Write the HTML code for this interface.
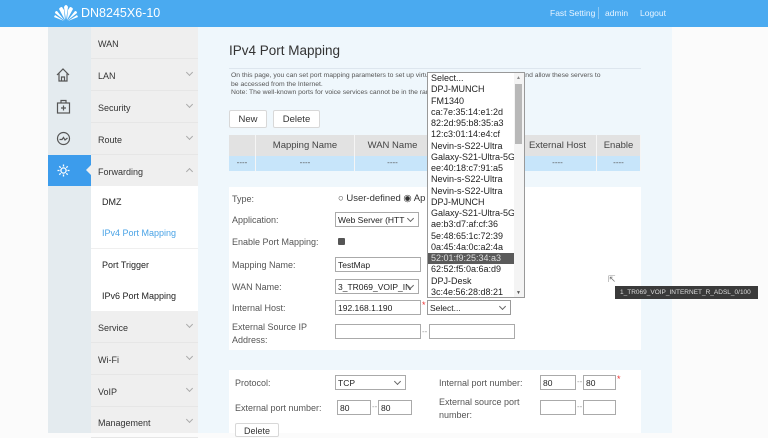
<!DOCTYPE html>
<html><head><meta charset="utf-8"><style>
*{margin:0;padding:0;box-sizing:border-box}
body{width:768px;height:433px;overflow:hidden;background:#fbfbfb;font-family:"Liberation Sans",sans-serif;position:relative;color:#333}
.a{position:absolute}
.top{left:0;top:0;width:768px;height:27px;background:#4aaaf0}
.ic{left:48px;top:27px;width:43px;height:406px;background:#e4ebef}
.menu{left:91px;top:27px;width:107px;height:406px;background:#efefef}
.mi{position:absolute;left:91px;width:107px;height:32px;font-size:9px;color:#333;padding:12px 0 0 7px;border-bottom:1px solid #e6e6e6}
.chev{position:absolute;right:6px;top:11px;width:5px;height:5px;border-right:1px solid #aaa;border-bottom:1px solid #aaa;transform:rotate(45deg)}
.sub{position:absolute;left:91px;width:107px;height:31px;font-size:9px;color:#222;padding:11px 0 0 11px;background:#fff}
.content{left:198px;top:27px;width:474px;height:406px;background:#eff7fc}
.btn{position:absolute;background:#fff;border:1px solid #d8d8d8;border-radius:2px;font-size:9.5px;text-align:center;padding-top:3px;height:18px}
.lbl{position:absolute;font-size:9px;color:#555}
.inp{position:absolute;background:#fff;border:1px solid #aaa;font-size:8.5px;padding:2px 2px;height:15px;color:#222;white-space:nowrap;overflow:hidden}
.sel:after{content:"";position:absolute;right:5px;top:3px;width:4px;height:4px;border-right:1px solid #666;border-bottom:1px solid #666;transform:rotate(45deg);background:#fff}
.th{position:absolute;top:135px;height:21px;background:#e2e2e2;font-size:9.5px;color:#444;text-align:center;padding-top:5px;border-right:1px solid #f5f5f5}
.td{position:absolute;top:156px;height:15px;background:#c7e5fa;font-size:8px;color:#555;text-align:center;padding-top:2px;border-right:1px solid #f5f5f5}
.dd{left:427px;top:72px;width:98px;height:226px;background:#fff;border:1px solid #999;font-size:9px;color:#222;font-family:"Liberation Sans",sans-serif}
.dd div{height:11.25px;line-height:11.25px;padding-left:3px;white-space:nowrap;width:86px;overflow:hidden}
</style></head><body>
<div class="a top"></div>
<svg class="a" style="left:54px;top:4px" width="24" height="18" viewBox="0 0 24 18"><g fill="#fff"><path d="M12 16 L10 3 Q11 1 12 1 Q13 1 14 3Z"/><path d="M11 16 L5 5 Q6 3 8 3 L10 6Z"/><path d="M13 16 L19 5 Q18 3 16 3 L14 6Z"/><path d="M10.5 16.5 L1 9 Q1 7 3 7 Z"/><path d="M13.5 16.5 L23 9 Q23 7 21 7Z"/><path d="M10 17 L0 13 L1 11Z"/><path d="M14 17 L24 13 L23 11Z"/></g></svg>
<div class="a" style="left:81px;top:6px;font-size:12.5px;color:#fff">DN8245X6-10</div>
<div class="a" style="left:550px;top:8px;font-size:8.5px;color:#e8f4ff">Fast Setting</div>
<div class="a" style="left:598px;top:7px;width:1px;height:12px;background:#8cc8f4"></div>
<div class="a" style="left:605px;top:8px;font-size:8.5px;color:#e8f4ff">admin</div>
<div class="a" style="left:640px;top:8px;font-size:8.5px;color:#e8f4ff">Logout</div>

<div class="a ic"></div>
<div class="a" style="left:48px;top:155px;width:43px;height:31px;background:#3c9cec"></div>
<div class="a" style="left:86px;top:164px;width:0;height:0;border-top:6px solid transparent;border-bottom:6px solid transparent;border-right:6px solid #efefef"></div>
<svg class="a" style="left:55px;top:67px" width="16" height="16" viewBox="0 0 16 16" fill="none" stroke="#555" stroke-width="1.2"><path d="M2 8 L8 2 L14 8 M4 6.5 V14 H12 V6.5 M6.5 14 V10 H9.5 V14"/></svg>
<svg class="a" style="left:56px;top:99px" width="15" height="15" viewBox="0 0 15 15" fill="none" stroke="#555" stroke-width="1.2"><rect x="1.5" y="4" width="12" height="10"/><path d="M5 4 V1.5 H10 V4 M7.5 6.5 V11.5 M5 9 H10"/></svg>
<svg class="a" style="left:56px;top:131px" width="15" height="15" viewBox="0 0 15 15" fill="none" stroke="#555" stroke-width="1.2"><circle cx="7.5" cy="7.5" r="6"/><path d="M3.5 8.5 L6 8.5 L7.5 6.5 L9 9 L11.5 7"/></svg>
<svg class="a" style="left:56px;top:163px" width="15" height="15" viewBox="0 0 15 15" fill="none" stroke="#fff" stroke-width="1.3"><circle cx="7.5" cy="7.5" r="2.6"/><path d="M7.5 1.5 V3.5 M7.5 11.5 V13.5 M1.5 7.5 H3.5 M11.5 7.5 H13.5 M3.3 3.3 L4.7 4.7 M10.3 10.3 L11.7 11.7 M3.3 11.7 L4.7 10.3 M10.3 4.7 L11.7 3.3"/></svg>

<div class="a menu"></div>
<div class="mi" style="top:27px;background:#efefef">WAN</div>
<div class="mi" style="top:59px">LAN<span class="chev"></span></div>
<div class="mi" style="top:91px">Security<span class="chev"></span></div>
<div class="mi" style="top:123px">Route<span class="chev"></span></div>
<div class="mi" style="top:155px">Forwarding<span class="chev" style="transform:rotate(225deg);top:14px"></span></div>
<div class="sub" style="top:186px">DMZ</div>
<div class="sub" style="top:217px;color:#4aa3e6">IPv4 Port Mapping</div>
<div class="sub" style="top:249px">Port Trigger</div>
<div class="sub" style="top:280px;height:31px">IPv6 Port Mapping</div>
<div class="mi" style="top:311px">Service<span class="chev"></span></div>
<div class="mi" style="top:343px">Wi-Fi<span class="chev"></span></div>
<div class="mi" style="top:375px">VoIP<span class="chev"></span></div>
<div class="mi" style="top:406px">Management<span class="chev"></span></div>

<div class="a content"></div>
<div class="a" style="left:229px;top:43px;font-size:13.5px;color:#333">IPv4 Port Mapping</div>
<div class="a" style="left:229px;top:68px;width:412px;height:1px;background:#dde6ee"></div>
<div class="a" style="left:231px;top:72px;font-size:6.8px;color:#555;line-height:8.5px">On this page, you can set port mapping parameters to set up virtual servers on the LAN network and allow these servers to<br>be accessed from the Internet.<br>Note: The well-known ports for voice services cannot be in the range of mapping ports.</div>
<div class="btn" style="left:229px;top:110px;width:38px">New</div>
<div class="btn" style="left:273px;top:110px;width:47px">Delete</div>
<div class="th" style="left:229px;width:27px"></div>
<div class="th" style="left:256px;width:99px">Mapping Name</div>
<div class="th" style="left:355px;width:76px">WAN Name</div>
<div class="th" style="left:431px;width:88px"></div>
<div class="th" style="left:519px;width:78px">External Host</div>
<div class="th" style="left:597px;width:44px">Enable</div>
<div class="td" style="left:229px;width:27px">----</div>
<div class="td" style="left:256px;width:99px">----</div>
<div class="td" style="left:355px;width:76px">----</div>
<div class="td" style="left:431px;width:88px"></div>
<div class="td" style="left:519px;width:78px">----</div>
<div class="td" style="left:597px;width:44px">----</div>

<div class="a" style="left:229px;top:187px;width:412px;height:163px;background:#fff"></div>
<div class="lbl" style="left:232px;top:194px">Type:</div>
<div class="lbl" style="left:338px;top:193px;font-size:9.5px;color:#333">○ User-defined ◉ Ap</div>
<div class="lbl" style="left:232px;top:215px">Application:</div>
<div class="inp sel" style="left:335px;top:212px;width:84px">Web Server (HTT</div>
<div class="lbl" style="left:232px;top:237px">Enable Port Mapping:</div>
<div class="a" style="left:338px;top:238px;width:7px;height:7px;background:#555;border-radius:1px"></div>
<div class="lbl" style="left:232px;top:260px">Mapping Name:</div>
<div class="inp" style="left:335px;top:257px;width:86px">TestMap</div>
<div class="lbl" style="left:232px;top:282px">WAN Name:</div>
<div class="inp sel" style="left:335px;top:279px;width:84px">3_TR069_VOIP_IN</div>
<div class="lbl" style="left:232px;top:303px">Internal Host:</div>
<div class="inp" style="left:335px;top:300px;width:86px">192.168.1.190</div>
<div class="a" style="left:422px;top:300px;font-size:9px;color:#e33">*</div>
<div class="inp sel" style="left:427px;top:300px;width:84px;border-color:#999">Select...</div>
<div class="lbl" style="left:232px;top:321px;line-height:13px">External Source IP<br>Address:</div>
<div class="inp" style="left:335px;top:324px;width:86px"></div>
<div class="a" style="left:422px;top:327px;font-size:8px;color:#999">--</div>
<div class="inp" style="left:429px;top:324px;width:86px"></div>

<div class="a" style="left:229px;top:370px;width:412px;height:63px;background:#fff"></div>
<div class="lbl" style="left:235px;top:378px">Protocol:</div>
<div class="inp sel" style="left:335px;top:375px;width:71px">TCP</div>
<div class="lbl" style="left:439px;top:378px">Internal port number:</div>
<div class="inp" style="left:540px;top:375px;width:36px">80</div>
<div class="a" style="left:577px;top:377px;font-size:8px;color:#999">--</div>
<div class="inp" style="left:583px;top:375px;width:33px">80</div>
<div class="a" style="left:617px;top:374px;font-size:9px;color:#e33">*</div>
<div class="lbl" style="left:235px;top:403px">External port number:</div>
<div class="inp" style="left:337px;top:400px;width:34px">80</div>
<div class="a" style="left:372px;top:402px;font-size:8px;color:#999">--</div>
<div class="inp" style="left:378px;top:400px;width:34px">80</div>
<div class="lbl" style="left:439px;top:396px;line-height:13px">External source port<br>number:</div>
<div class="inp" style="left:540px;top:400px;width:36px"></div>
<div class="a" style="left:577px;top:402px;font-size:8px;color:#999">--</div>
<div class="inp" style="left:583px;top:400px;width:33px"></div>
<div class="btn" style="left:235px;top:423px;width:44px;height:14px;font-size:9px;padding-top:2px">Delete</div>

<div class="a dd">
<div>Select...</div><div>DPJ-MUNCH</div><div>FM1340</div><div>ca:7e:35:14:e1:2d</div><div>82:2d:95:b8:35:a3</div><div>12:c3:01:14:e4:cf</div><div>Nevin-s-S22-Ultra</div><div>Galaxy-S21-Ultra-5G</div><div>ee:40:18:c7:91:a5</div><div>Nevin-s-S22-Ultra</div><div>Nevin-s-S22-Ultra</div><div>DPJ-MUNCH</div><div>Galaxy-S21-Ultra-5G</div><div>ae:b3:d7:af:cf:36</div><div>5e:48:65:1c:72:39</div><div>0a:45:4a:0c:a2:4a</div><div style="background:#5a5a5a;color:#ddd">52:01:f9:25:34:a3</div><div>62:52:f5:0a:6a:d9</div><div>DPJ-Desk</div><div>3c:4e:56:28:d8:21</div>
</div>
<div class="a" style="left:514px;top:73px;width:10px;height:224px;background:#f4f4f4"></div>
<div class="a" style="left:515px;top:84px;width:7px;height:60px;background:#b8b8b8"></div>
<div class="a" style="left:516px;top:75px;font-size:5px;color:#888">▲</div>
<div class="a" style="left:516px;top:290px;font-size:5px;color:#555">▼</div>

<div class="a" style="left:608px;top:274px;font-size:9px;color:#777">⇱</div>
<div class="a" style="left:615px;top:286px;width:143px;height:13px;background:#3a3a3a;color:#ddd;font-size:6.5px;padding:3px 0 0 5px">1_TR069_VOIP_INTERNET_R_ADSL_0/100</div>
</body></html>
